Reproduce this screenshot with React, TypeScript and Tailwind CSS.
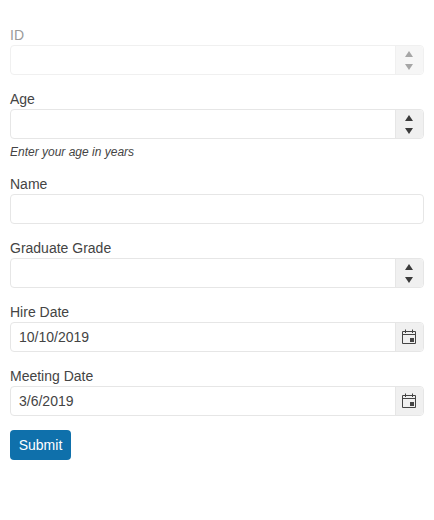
import { ReactNode } from 'react';

function Arrow({ up, disabled }: { up?: boolean; disabled?: boolean }) {
  return (
    <svg width="8" height="6" viewBox="0 0 8 6" className={`mr-px ${disabled ? 'text-[#a6a6a6]' : 'text-[#3a3a3a]'}`}>
      <path d={up ? 'M4 0 L8 6 L0 6 Z' : 'M0 0 L8 0 L4 6 Z'} fill="currentColor" />
    </svg>
  );
}

function CalendarIcon() {
  return (
    <svg width="15" height="16" viewBox="0 0 15 16" className="mr-px text-[#444]">
      <path d="M0.5 2.5 H13.5 V14.5 H0.5 Z M0.5 5.5 H13.5" fill="none" stroke="currentColor" strokeWidth="1" />
      <path d="M3 0.5 H4 V4 H3 Z M10 0.5 H11 V4 H10 Z" fill="currentColor" />
      <rect x="8" y="9" width="4" height="4" fill="currentColor" />
    </svg>
  );
}

function Field({ label, disabled, children }: { label: string; disabled?: boolean; children: ReactNode }) {
  return (
    <div className="mb-[14px]">
      <label className={`block h-5 leading-5 ${disabled ? 'text-[#9a9a9a]' : 'text-[#444]'}`}>{label}</label>
      {children}
    </div>
  );
}

function NumberBox({ disabled }: { disabled?: boolean }) {
  return (
    <div className={`flex h-[30px] rounded border bg-white ${disabled ? 'border-[#f0f0f0]' : 'border-[#e6e6e6]'}`}>
      <div className="flex-1" />
      <div className={`flex w-[28px] flex-col rounded-r border-l ${disabled ? 'border-[#f0f0f0] bg-[#f6f6f6]' : 'border-[#e6e6e6] bg-[#f0f0f0]'}`}>
        <span className="flex flex-1 items-center justify-center pt-px"><Arrow up disabled={disabled} /></span>
        <span className="flex flex-1 items-center justify-center pb-px"><Arrow disabled={disabled} /></span>
      </div>
    </div>
  );
}

function DateBox({ value }: { value: string }) {
  return (
    <div className="flex h-[30px] rounded border border-[#e6e6e6] bg-white">
      <div className="flex flex-1 items-center pl-2 text-[#444]">{value}</div>
      <div className="flex w-[28px] items-center justify-center rounded-r border-l border-[#e6e6e6] bg-[#f0f0f0]">
        <CalendarIcon />
      </div>
    </div>
  );
}

export default function App() {
  return (
    <form className="px-[10px] pt-[25px] text-[14px] font-['Liberation_Sans',Arial,sans-serif]">
      <Field label="ID" disabled>
        <NumberBox disabled />
      </Field>
      <Field label="Age">
        <NumberBox />
        <div className="mt-[6px] h-[15px] text-[12px] leading-[15px] italic text-[#444]">Enter your age in years</div>
      </Field>
      <Field label="Name">
        <div className="h-[30px] rounded border border-[#e6e6e6] bg-white" />
      </Field>
      <Field label="Graduate Grade">
        <NumberBox />
      </Field>
      <Field label="Hire Date">
        <DateBox value="10/10/2019" />
      </Field>
      <Field label="Meeting Date">
        <DateBox value="3/6/2019" />
      </Field>
      <button type="button" className="h-[30px] w-[61px] rounded bg-[#0f70ab] text-white">Submit</button>
    </form>
  );
}
